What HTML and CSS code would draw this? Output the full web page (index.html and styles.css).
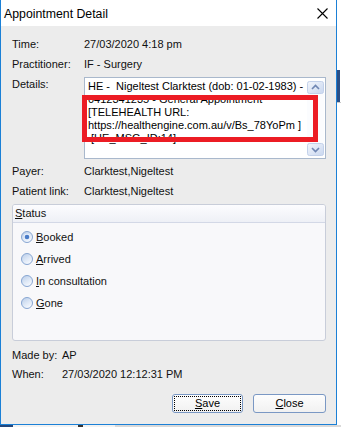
FILE: index.html
```html
<!DOCTYPE html>
<html>
<head>
<meta charset="utf-8">
<link rel="stylesheet" href="styles.css">
</head>
<body>
<svg class="defs" width="0" height="0">
  <defs>
    <linearGradient id="radioFill" x1="0" y1="0" x2="0.6" y2="1">
      <stop offset="0" stop-color="#b7cbe8"/>
      <stop offset="0.55" stop-color="#dbe6f5"/>
      <stop offset="1" stop-color="#f6f9fe"/>
    </linearGradient>
    <linearGradient id="sbBtn" x1="0" y1="0" x2="1" y2="1">
      <stop offset="0" stop-color="#f3f6fc"/>
      <stop offset="1" stop-color="#c9d7ef"/>
    </linearGradient>
  </defs>
</svg>
<div class="screen">
  <div class="window">
    <div class="titlebar">
      <span class="title">Appointment Detail</span>
      <svg class="close-x" width="11" height="11" viewBox="0 0 11 11"><path d="M0.5 0.5 L10.5 10.5 M10.5 0.5 L0.5 10.5" stroke="#000" stroke-width="1.1" fill="none"/></svg>
    </div>
    <div class="content">
      <div class="row"><span class="label">Time:</span><span>27/03/2020 4:18 pm</span></div>
      <div class="row"><span class="label">Practitioner:</span><span>IF - Surgery</span></div>
      <div class="details">
        <span class="label dlabel">Details:</span>
        <div class="textbox">
          <div class="text">HE -  Nigeltest Clarktest (dob: 01-02-1983) -
0412341235 - General Appointment
[TELEHEALTH URL:
https://healthengine.com.au/v/Bs_78YoPm ]
 [HE_MSG_ID:14]</div>
          <div class="scrollbar">
            <svg class="sb-btn" width="17" height="13" viewBox="0 0 17 13"><rect x="0.5" y="0.5" width="16" height="12" rx="2" fill="url(#sbBtn)" stroke="#c3d1ea"/><path d="M5 8 L8.5 4.5 L12 8" stroke="#6f86b3" stroke-width="1.6" fill="none"/></svg>
            <div class="sb-track"></div>
            <svg class="sb-btn" width="17" height="13" viewBox="0 0 17 13"><rect x="0.5" y="0.5" width="16" height="12" rx="2" fill="url(#sbBtn)" stroke="#c3d1ea"/><path d="M5 5 L8.5 8.5 L12 5" stroke="#6f86b3" stroke-width="1.6" fill="none"/></svg>
          </div>
        </div>
      </div>
      <div class="row payer"><span class="label">Payer:</span><span>Clarktest,Nigeltest</span></div>
      <div class="row"><span class="label">Patient link:</span><span>Clarktest,Nigeltest</span></div>
      <div class="group">
        <div class="group-head"><u>S</u>tatus</div>
        <div class="radios">
          <div class="radio"><svg width="12" height="12" viewBox="0 0 12 12"><circle cx="6" cy="6" r="5.5" fill="url(#radioFill)" stroke="#87a5d1"/><circle cx="6" cy="6" r="3.2" fill="#e9f0fb"/><circle cx="6" cy="6" r="2.3" fill="#4a7cc8"/></svg><span><u>B</u>ooked</span></div>
          <div class="radio"><svg width="12" height="12" viewBox="0 0 12 12"><circle cx="6" cy="6" r="5.5" fill="url(#radioFill)" stroke="#87a5d1"/></svg><span><u>A</u>rrived</span></div>
          <div class="radio"><svg width="12" height="12" viewBox="0 0 12 12"><circle cx="6" cy="6" r="5.5" fill="url(#radioFill)" stroke="#87a5d1"/></svg><span><u>I</u>n consultation</span></div>
          <div class="radio"><svg width="12" height="12" viewBox="0 0 12 12"><circle cx="6" cy="6" r="5.5" fill="url(#radioFill)" stroke="#87a5d1"/></svg><span><u>G</u>one</span></div>
        </div>
      </div>
      <div class="row meta madeby"><span class="mlabel">Made by:</span><span>AP</span></div>
      <div class="row meta"><span class="mlabel">When:</span><span>27/03/2020 12:12:31 PM</span></div>
      <div class="buttons">
        <button class="btn save"><span class="focus"><u>S</u>ave</span></button>
        <button class="btn close"><span class="nofocus"><u>C</u>lose</span></button>
      </div>
    </div>
  </div>
  <div class="side">
    <div class="side-navy"></div>
    <div class="side-line"></div>
  </div>
</div>
<div class="bottomstrip">
  <span class="bs-navy"></span><span class="bs-light"></span><span class="bs-dark"></span><span class="bs-light2"></span>
</div>
<div class="annotation"></div>
</body>
</html>
```
FILE: styles.css
```css
html, body {
  margin: 0;
  padding: 0;
}
body {
  width: 341px;
  height: 427px;
  overflow: hidden;
  background: #ffffff;
  font-family: "Liberation Sans", Arial, sans-serif;
  position: relative;
}
.defs {
  position: absolute;
  width: 0;
  height: 0;
}
.screen {
  display: flex;
  height: 425px;
}
.window {
  width: 337px;
  height: 425px;
  box-sizing: border-box;
  border-left: 1px solid #1b80d6;
  border-right: 1px solid #1b80d6;
  border-bottom: 1px solid #1b80d6;
  background: #ececec;
  display: flex;
  flex-direction: column;
}
.titlebar {
  height: 26px;
  flex: none;
  background: #ffffff;
  display: flex;
  align-items: center;
  justify-content: space-between;
  padding: 0 8px 0 3px;
}
.title {
  font-size: 12.3px;
  color: #000;
  padding-top: 1px;
}
.close-x {
  margin-top: 1px;
}
.content {
  padding: 8px 10px 0 11px;
  font-size: 11px;
  color: #111;
}
.row {
  display: flex;
  height: 20px;
  line-height: 20px;
  white-space: nowrap;
}
.label {
  width: 72px;
  flex: none;
}
.details {
  display: flex;
  margin-top: 3px;
}
.dlabel {
  line-height: 14px;
}
.textbox {
  flex: 1;
  height: 82px;
  box-sizing: border-box;
  border: 1px solid #a9b8cc;
  background: #ffffff;
  display: flex;
  overflow: hidden;
}
.text {
  flex: 1;
  white-space: pre;
  line-height: 13px;
  padding: 2px 0 0 3px;
  overflow: hidden;
  color: #000;
}
.scrollbar {
  width: 17px;
  margin: 3px 1px 2px 0;
  display: flex;
  flex-direction: column;
  background: #fbfcfe;
}
.sb-btn {
  display: block;
  flex: none;
}
.sb-track {
  flex: 1;
}
.payer {
  margin-top: 2px;
}
.group {
  margin-top: 3px;
  height: 137px;
  box-sizing: border-box;
  border: 1px solid #c8cdd9;
  border-radius: 3px;
  background: #f8f8fa;
  overflow: hidden;
}
.group-head {
  height: 18px;
  box-sizing: border-box;
  line-height: 17px;
  padding-left: 2px;
  background: linear-gradient(#fcfcfe, #eef0f6);
  border-bottom: 1px solid #d3d8e6;
}
.radios {
  padding: 3px 0 0 8px;
}
.radio {
  height: 22px;
  display: flex;
  align-items: center;
  gap: 3px;
}
.radio svg {
  display: block;
  flex: none;
}
.meta {
  height: 19px;
  line-height: 19px;
}
.madeby {
  margin-top: 4px;
  height: 20px;
  line-height: 20px;
}
.mlabel {
  width: 50px;
  flex: none;
}
.buttons {
  margin-top: 10px;
  display: flex;
  justify-content: flex-end;
  gap: 10px;
}
.btn {
  height: 19px;
  box-sizing: border-box;
  border: 1px solid #7a98c4;
  border-radius: 3px;
  background: linear-gradient(#fdfdfd, #f1f1f1);
  font-family: "Liberation Sans", Arial, sans-serif;
  font-size: 11px;
  color: #000;
  padding: 1px;
  display: flex;
}
.save {
  width: 71px;
}
.close {
  width: 73px;
}
.focus, .nofocus {
  flex: 1;
  display: flex;
  align-items: center;
  justify-content: center;
  border: 1px dotted #000;
  line-height: 13px;
}
.nofocus {
  border-color: transparent;
}
.side {
  flex: 1;
  background: #ffffff;
  display: flex;
  flex-direction: column;
}
.side-navy {
  margin-top: 70px;
  height: 32px;
  width: 3px;
  background: #2a4f86;
}
.side-line {
  height: 1px;
  background: #c8c8c8;
}
.bottomstrip {
  height: 2px;
  display: flex;
  background: #d9d9d9;
}
.bs-navy {
  width: 13px;
  background: #23477c;
}
.bs-light {
  width: 65px;
  background: #f2f2f2;
}
.bs-dark {
  width: 5px;
  background: #333;
}
.bs-light2 {
  width: 32px;
  background: #f2f2f2;
}
.annotation {
  position: absolute;
  left: 82px;
  top: 95px;
  width: 236px;
  height: 47px;
  box-sizing: border-box;
  border: 5px solid #ec1c24;
}
```
